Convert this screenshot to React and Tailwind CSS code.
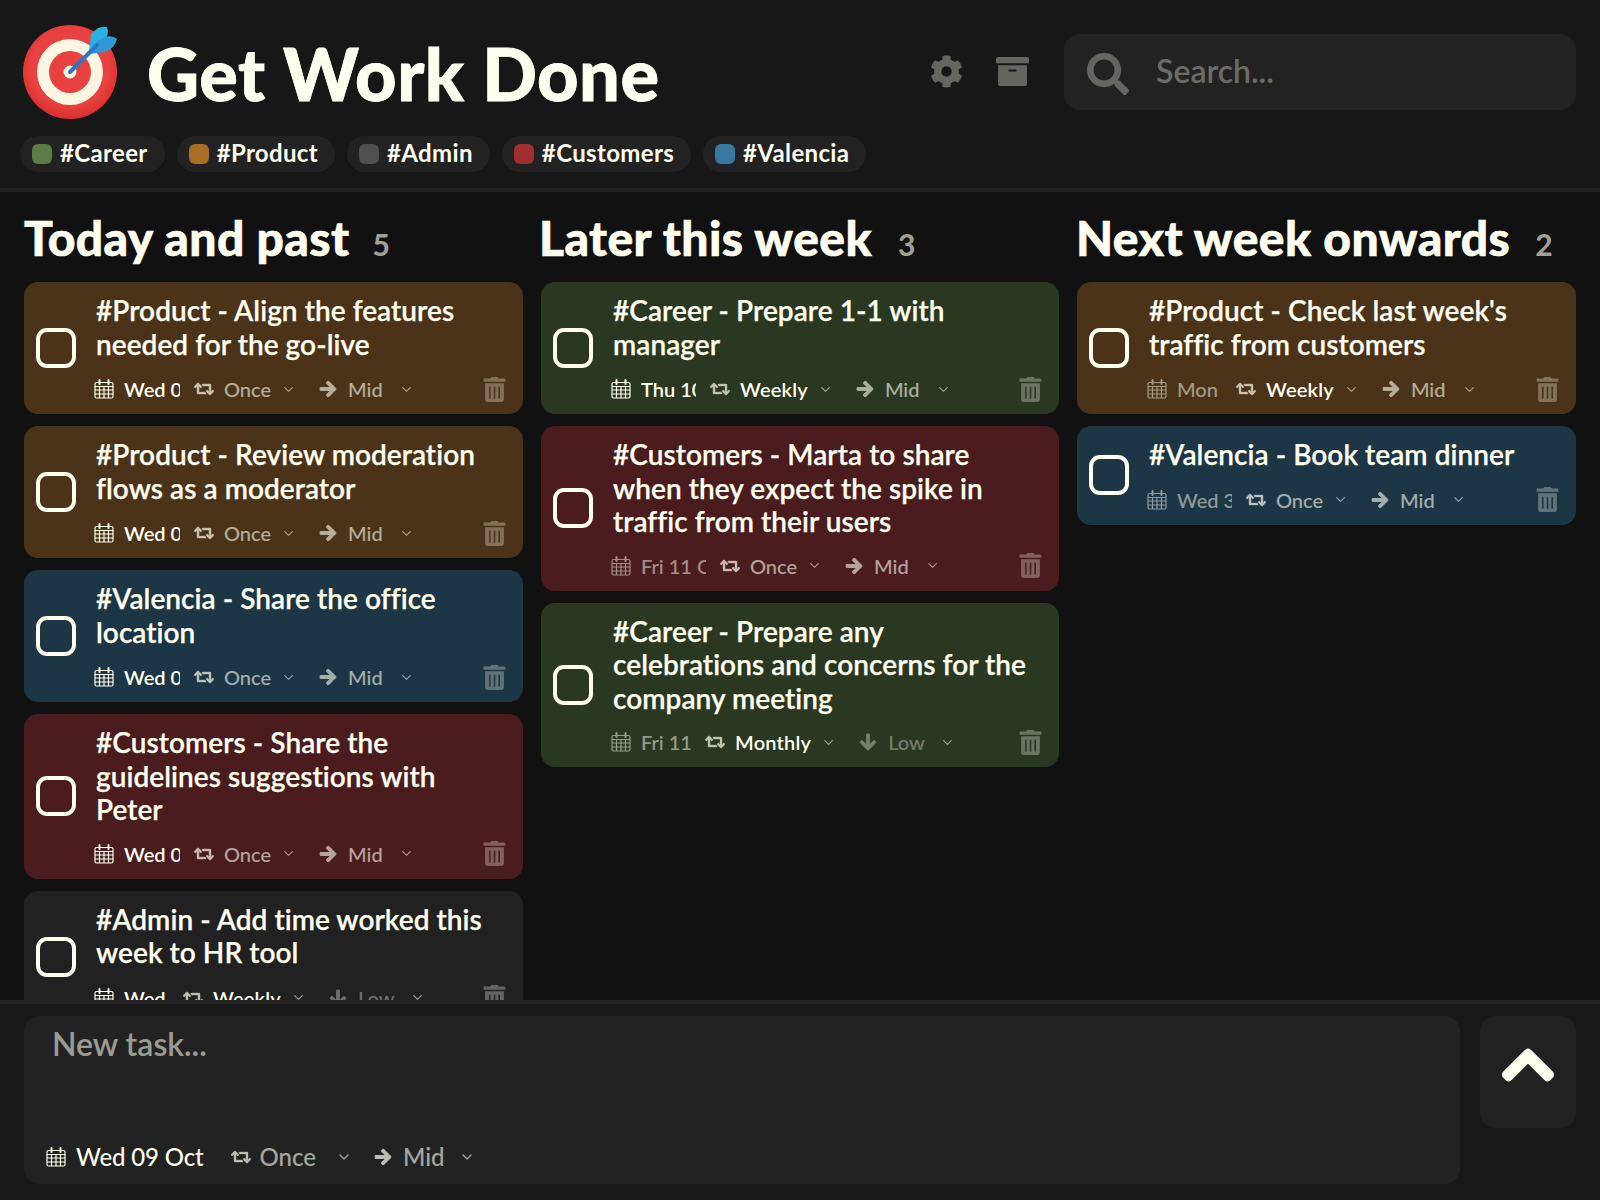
import React from "react";
import { FaCog, FaArchive, FaSearch, FaRetweet, FaArrowRight, FaArrowDown, FaTrashAlt, FaChevronUp } from "react-icons/fa";
import { ChevronDown } from "lucide-react";

const BG = {
  product: "bg-[#4a3319]",
  career: "bg-[#2a3822]",
  valencia: "bg-[#1c3646]",
  customers: "bg-[#4a1c1e]",
  admin: "bg-[#212121]",
};

function Logo() {
  return (
    <svg width="98" height="98" viewBox="0 0 98 98" className="shrink-0">
      <defs>
        <radialGradient id="rg" cx="0.5" cy="0.45" r="0.55">
          <stop offset="0.75" stopColor="#e8413f" />
          <stop offset="1" stopColor="#d9302e" />
        </radialGradient>
      </defs>
      <circle cx="47" cy="50" r="47" fill="url(#rg)" />
      <circle cx="47" cy="50" r="33" fill="#fdf6e3" />
      <circle cx="47" cy="50" r="21" fill="#e8413f" />
      <circle cx="47" cy="50" r="6.500" fill="#fdf6e3" />
      <path d="M66 30 L68 12 Q76 3 84 5 Q87 12 80 22 Z" fill="#29b0e0" />
      <path d="M66 32 L82 30 Q92 26 94 17 Q90 13 82 15 Q72 18 66 32 Z" fill="#3098d8" />
      <path d="M47 50 L74 23" stroke="#2478c8" strokeWidth="4" strokeLinecap="round" />
    </svg>
  );
}

function Calendar({ size = 20 }) {
  return (
    <svg width={size} height={size} viewBox="0 0 20 20" fill="none" stroke="currentColor" strokeWidth="1.2" className="shrink-0">
      <rect x="1" y="3.5" width="18" height="15.5" rx="1.5" />
      <path d="M1 7.5H19M1 11H19M1 15H19M5.5 7.5V19M10 7.5V19M14.500 7.5V19" />
      <path d="M5.5 1V5M14.500 1V5" strokeWidth="2" strokeLinecap="round" />
    </svg>
  );
}

function Meta({ date, dateW, dateOn, repeat, repeatOn, prio }) {
  const low = prio === "Low";
  return (
    <div className="flex items-center h-[30px] pl-[70px] pr-[16px] text-[20px] leading-[30px] font-medium text-[#fffff0]">
      <span className={dateOn ? "flex items-center font-semibold" : "flex items-center opacity-50"}>
        <Calendar />
        <span className="ml-[10px] block overflow-hidden whitespace-nowrap" style={{ width: dateW }}>{date}</span>
      </span>
      <FaRetweet className="ml-[14px] shrink-0 opacity-70" size={20} strokeWidth={12} />
      <span className={repeatOn ? "ml-[10px] font-semibold tracking-[0.2px]" : "ml-[10px] opacity-60"}>{repeat}</span>
      <ChevronDown className="ml-[10px] opacity-50 shrink-0" size={15} strokeWidth={2} />
      <span className={low ? "ml-[23px] flex items-center opacity-35" : "ml-[23px] flex items-center opacity-60"}>
        {low ? <FaArrowDown size={18} className="shrink-0" strokeWidth={30} /> : <FaArrowRight size={18} className="shrink-0" strokeWidth={30} />}
        <span className="ml-[11px]">{prio}</span>
      </span>
      <ChevronDown className={low ? "ml-[15px] opacity-50 shrink-0" : "ml-[16px] opacity-50 shrink-0"} size={15} strokeWidth={2} />
      <FaTrashAlt className="ml-auto shrink-0 opacity-30" size={25} />
    </div>
  );
}

function Card({ tag, text, tall, ...meta }) {
  return (
    <div className={`${BG[tag]} rounded-[14px] shrink-0 relative pt-[12px] pb-[10px]`}>
      <div className="pl-[72px] pr-6 text-[28px] leading-[33.5px] font-semibold tracking-[0.05px] [-webkit-text-stroke:0.25px_#fffff0] text-[#fffff0]">{text}</div>
      <div className={tall ? "pt-[12px]" : "pt-[13px]"}><Meta {...meta} /></div>
      <div className="absolute left-[12px] inset-y-0 flex items-center">
        <div className="w-[40px] h-[40px] rounded-[11px] border-[4px] border-[#fffff0]" />
      </div>
    </div>
  );
}

function ColumnHead({ title, count, shift, countGap }) {
  return (
    <div className={`flex items-baseline h-[90px] pt-[16px] ${shift}`}>
      <h2 className="text-[48px] leading-[60px] font-black tracking-[0.4px] [-webkit-text-stroke:0.6px_#fffff0] text-[#fffff0] whitespace-nowrap">{title}</h2>
      <span className={`${countGap} text-[30px] font-bold text-[#fffff0] opacity-60`}>{count}</span>
    </div>
  );
}

const TAGS = [
  ["#Career", "bg-[#5a7d45]"],
  ["#Product", "bg-[#a86f24]"],
  ["#Admin", "bg-[#505050]"],
  ["#Customers", "bg-[#a03030]"],
  ["#Valencia", "bg-[#36789f]"],
];

export default function App() {
  return (
    <div className="w-[1600px] h-[1200px] flex flex-col overflow-hidden bg-[#111111] text-[#fffff0] font-['Lato','Liberation_Sans',sans-serif]">
      <header className="h-[192px] shrink-0 bg-[#171717] border-b-[4px] border-[#222222] pt-[22px]">
        <div className="flex items-start pl-[23px] pr-[24px] h-[114px]">
          <Logo />
          <h1 className="ml-[26px] mt-[2px] text-[72px] leading-[98px] font-black tracking-[0.5px] [-webkit-text-stroke:0.8px_#fffff0] whitespace-nowrap">Get Work Done</h1>
          <div className="ml-auto mt-[1px] flex items-center h-[98px]">
            <FaCog size={33} className="-mt-[2px] text-[#666660]" />
            <FaArchive size={33} className="-mt-[2px] ml-[33px] text-[#666660]" />
            <div className="ml-[35px] w-[512px] h-[76px] rounded-[16px] bg-[#222222] flex items-center pl-[23px]">
              <FaSearch size={42} className="mt-[3px] text-[#666660]" />
              <span className="ml-[27px] -mt-[2px] text-[32px] font-semibold text-[#6c6c66]">Search...</span>
            </div>
          </div>
        </div>
        <div className="flex gap-[12px] pl-[20px]">
          {TAGS.map(([name, c]) => (
            <div key={name} className="h-[36px] rounded-[18px] bg-[#222222] flex items-center pl-[12px] pr-[17px]">
              <span className={`${c} w-[20px] h-[20px] rounded-[6px]`} />
              <span className="ml-[8px] pb-[2px] text-[24px] font-bold tracking-[0.35px]">{name}</span>
            </div>
          ))}
        </div>
      </header>

      <main className="flex-1 min-h-0 overflow-hidden pl-[24px] grid grid-cols-[499px_518px_499px] gap-[18px] items-start">
        <div className="flex flex-col">
          <ColumnHead title="Today and past" count="5" shift="" countGap="ml-[23px]" />
          <div className="flex flex-col gap-[12px]">
            <Card tag="product" text="#Product - Align the features needed for the go-live" date="Wed 09 Oct" dateW={56} dateOn repeat="Once" prio="Mid" />
            <Card tag="product" text="#Product - Review moderation flows as a moderator" date="Wed 09 Oct" dateW={56} dateOn repeat="Once" prio="Mid" />
            <Card tag="valencia" text="#Valencia - Share the office location" date="Wed 09 Oct" dateW={56} dateOn repeat="Once" prio="Mid" />
            <Card tall tag="customers" text="#Customers - Share the guidelines suggestions with Peter" date="Wed 09 Oct" dateW={56} dateOn repeat="Once" prio="Mid" />
            <Card tag="admin" text="#Admin - Add time worked this week to HR tool" date="Wed 09 Oct" dateW={45} dateOn repeat="Weekly" repeatOn prio="Low" />
          </div>
        </div>
        <div className="flex flex-col">
          <ColumnHead title="Later this week" count="3" shift="-ml-[2px]" countGap="ml-[26px]" />
          <div className="flex flex-col gap-[12px]">
            <Card tag="career" text="#Career - Prepare 1-1 with manager" date="Thu 10 Oct" dateW={55} dateOn repeat="Weekly" repeatOn prio="Mid" />
            <Card tall tag="customers" text="#Customers - Marta to share when they expect the spike in traffic from their users" date="Fri 11 Oct" dateW={65} repeat="Once" prio="Mid" />
            <Card tall tag="career" text="#Career - Prepare any celebrations and concerns for the company meeting" date="Fri 11" dateW={50} repeat="Monthly" repeatOn prio="Low" />
          </div>
        </div>
        <div className="flex flex-col">
          <ColumnHead title="Next week onwards" count="2" shift="-ml-[1px]" countGap="ml-[25px]" />
          <div className="flex flex-col gap-[12px]">
            <Card tag="product" text="#Product - Check last week's traffic from customers" date="Mon" dateW={45} repeat="Weekly" repeatOn prio="Mid" />
            <Card tag="valencia" text="#Valencia - Book team dinner" date="Wed 30 Oct" dateW={55} repeat="Once" prio="Mid" />
          </div>
        </div>
      </main>

      <footer className="h-[200px] shrink-0 bg-[#181818] border-t-[4px] border-[#222222] pt-[12px] pl-[24px] pr-[24px] flex items-start gap-[20px]">
        <div className="flex-1 h-[168px] rounded-[16px] bg-[#222222] flex flex-col justify-between pl-[22px] pt-[8px] pb-[10px]">
          <div className="pl-[6px] text-[32px] leading-[40px] font-semibold text-[#fffff0] opacity-55">New task...</div>
          <div className="flex items-center h-[34px] text-[24px] font-medium">
            <Calendar />
            <span className="ml-[10px] tracking-[-0.15px]">Wed 09 Oct</span>
            <FaRetweet size={20} strokeWidth={12} className="ml-[27px] opacity-70" />
            <span className="ml-[9px] opacity-60">Once</span>
            <ChevronDown size={16} strokeWidth={2} className="ml-[20px] opacity-60" />
            <FaArrowRight size={18} strokeWidth={30} className="ml-[22px] opacity-70" />
            <span className="ml-[11px] opacity-60">Mid</span>
            <ChevronDown size={16} strokeWidth={2} className="ml-[14px] opacity-60" />
          </div>
        </div>
        <div className="w-[96px] h-[112px] rounded-[16px] bg-[#222222] flex items-center justify-center pb-[14px]">
          <FaChevronUp size={58} strokeWidth={24} />
        </div>
      </footer>
    </div>
  );
}
